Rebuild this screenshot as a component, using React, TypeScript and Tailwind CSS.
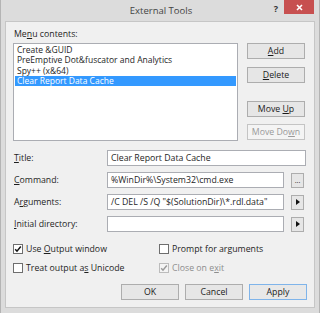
import React from "react";

const F = { fontFamily: '"Segoe UI", "Open Sans", "Noto Sans", sans-serif' };

function Btn({ children, w = "w-[58px]", disabled = false, def = false }: { children: React.ReactNode; w?: string; disabled?: boolean; def?: boolean }) {
  const base = "h-[16px] flex items-center justify-center text-[8.75px] leading-none border";
  const cls = disabled
    ? "border-[#c4c4c4] bg-[#f4f4f4] text-[#9a9a9a]"
    : def
    ? "border-[#7fb4ea] bg-[#e8e8e8] text-[#1a1a1a]"
    : "border-[#adadad] bg-[#e6e6e6] text-[#1a1a1a]";
  return (
    <div className={`${base} ${cls} ${w}`}>
      <span>{children}</span>
    </div>
  );
}

function U({ children }: { children: React.ReactNode }) {
  return <span className="underline underline-offset-[1px]">{children}</span>;
}

function Check({ checked = false, disabled = false }: { checked?: boolean; disabled?: boolean }) {
  return (
    <div className={`w-[10px] h-[10px] shrink-0 border flex items-center justify-center ${disabled ? "border-[#bcbcbc] bg-[#f4f4f4]" : "border-[#6e6e6e] bg-white"}`}>
      {checked && (
        <svg width="8" height="8" viewBox="0 0 8 8">
          <path d="M1.2 4.2 L3 6.2 L6.8 1.6" fill="none" stroke={disabled ? "#9a9a9a" : "#111"} strokeWidth="1.5" />
        </svg>
      )}
    </div>
  );
}

function SmallBtn({ children }: { children: React.ReactNode }) {
  return (
    <div className="w-[13px] h-[15px] border border-[#adadad] bg-[#e6e6e6] flex items-center justify-center text-[7px] leading-none text-[#111]">
      {children}
    </div>
  );
}

function Arrow() {
  return (
    <svg width="4" height="6" viewBox="0 0 4 6">
      <path d="M0 0 L4 3 L0 6 Z" fill="#111" />
    </svg>
  );
}

export default function App() {
  return (
    <div style={F} className="w-[320px] h-[313px] bg-[#dcdcdc] border-l border-r border-[#b4b4b4] flex flex-col text-[#1e1e1e]">
      {/* title bar */}
      <div className="h-[21px] flex items-start relative">
        <div className="flex-1 text-center text-[9.5px] leading-none text-[#444] pt-[6px] pl-[2px]">External Tools</div>
        <div className="absolute right-[5px] top-0 flex items-start">
          <div className="text-[9px] font-bold text-[#333] leading-none mr-[6px] mt-[4px]">?</div>
          <div className="w-[30px] h-[14px] bg-[#c75050] flex items-center justify-center">
            <svg width="7" height="7" viewBox="0 0 7 7">
              <path d="M1 1 L6 6 M6 1 L1 6" stroke="#fff" strokeWidth="1.6" />
            </svg>
          </div>
        </div>
      </div>
      {/* client */}
      <div className="mx-[4px] mb-[5px] flex-1 bg-[#f0f0f0] border border-[#c6c6c6] pl-[7px] pr-[7px] pt-[7px] flex flex-col text-[8.75px] leading-none">
        <div className="flex">
          <div className="w-[225px] flex flex-col">
            <div className="h-[14px] pl-[1px] pt-[1px]">Me<U>n</U>u contents:</div>
            <div className="h-[98px] bg-white border border-[#abadb3] px-[1px] flex flex-col text-[8.5px] leading-[8px]">
              <div className="h-[11px] pl-[2px] flex items-center">Create &amp;GUID</div>
              <div className="h-[10px] pl-[2px] flex items-center">PreEmptive Dot&amp;fuscator and Analytics</div>
              <div className="h-[11px] pl-[2px] flex items-center">Spy++ (x&amp;64)</div>
              <div className="h-[10px] pl-[2px] flex items-center bg-[#3399ff] text-white">Clear Report Data Cache</div>
            </div>
          </div>
          <div className="ml-[9px] pt-[14px] flex flex-col">
            <Btn><U>A</U>dd</Btn>
            <div className="h-[8px]" />
            <Btn><U>D</U>elete</Btn>
            <div className="h-[18px]" />
            <Btn>Move <U>U</U>p</Btn>
            <div className="h-[7px]" />
            <Btn disabled>Move Do<U>w</U>n</Btn>
          </div>
        </div>

        <div className="mt-[9px] flex flex-col gap-[6px]">
          <div className="flex items-center h-[16px]">
            <div className="w-[94px] pl-[1px]"><U>T</U>itle:</div>
            <div className="w-[199px] h-[16px] bg-white border border-[#abadb3] flex items-center pl-[3px]">Clear Report Data Cache</div>
          </div>
          <div className="flex items-center h-[16px]">
            <div className="w-[94px] pl-[1px]"><U>C</U>ommand:</div>
            <div className="w-[177px] h-[16px] bg-white border border-[#abadb3] flex items-center pl-[3px]">%WinDir%\System32\cmd.exe</div>
            <div className="ml-[7px]"><SmallBtn>...</SmallBtn></div>
          </div>
          <div className="flex items-center h-[16px]">
            <div className="w-[94px] pl-[1px]">A<U>r</U>guments:</div>
            <div className="w-[177px] h-[16px] bg-white border border-[#abadb3] flex items-center pl-[3px] whitespace-nowrap overflow-hidden">/C DEL /S /Q "$(SolutionDir)\*.rdl.data"</div>
            <div className="ml-[7px]"><SmallBtn><Arrow /></SmallBtn></div>
          </div>
          <div className="flex items-center h-[16px]">
            <div className="w-[94px] pl-[1px]"><U>I</U>nitial directory:</div>
            <div className="w-[177px] h-[16px] bg-white border border-[#abadb3]" />
            <div className="ml-[7px]"><SmallBtn><Arrow /></SmallBtn></div>
          </div>
        </div>

        <div className="mt-[12px] grid grid-cols-[146px_1fr] gap-y-[9px]">
          <div className="flex items-center gap-[3px]">
            <Check checked />
            <span>Use <U>O</U>utput window</span>
          </div>
          <div className="flex items-center gap-[3px]">
            <Check />
            <span>Prompt for arguments</span>
          </div>
          <div className="flex items-center gap-[3px]">
            <Check />
            <span>Treat output a<U>s</U> Unicode</span>
          </div>
          <div className="flex items-center gap-[3px] text-[#8d8d8d]">
            <Check checked disabled />
            <span>Close on e<U>x</U>it</span>
          </div>
        </div>

        <div className="mt-[11px] flex justify-end gap-[6px]">
          <Btn>OK</Btn>
          <Btn>Cancel</Btn>
          <Btn def>Apply</Btn>
        </div>
      </div>
    </div>
  );
}
